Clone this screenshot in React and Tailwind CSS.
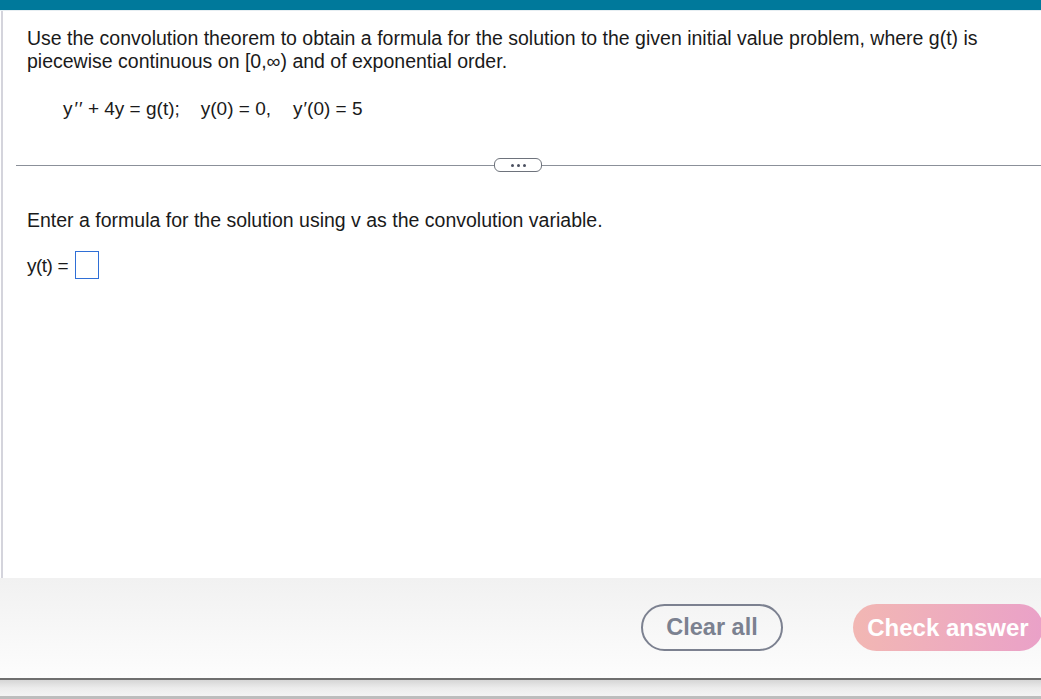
import React from "react";

const font = { fontFamily: '"Liberation Sans", Arial, sans-serif' };

const App = () => {
  return (
    <div className="flex flex-col h-[699px] w-full overflow-hidden bg-white text-[#1a1a1a]" style={font}>
      {/* Top bar */}
      <div className="h-[10px] bg-[#00799b] shrink-0" />
      <div className="h-[1px] bg-[#e6eef2] shrink-0" />

      {/* Question */}
      <div className="flex-1 min-h-0 flex flex-col border-l-2 border-[#d4d4dc] ml-[1px]">
        <div className="pl-[24px] pr-6 pt-[16px] text-[19.5px] leading-[23px]">
          <p>
            Use the convolution theorem to obtain a formula for the solution to the given initial value problem, where g(t) is
            <br />
            piecewise continuous on [0,∞) and of exponential order.
          </p>
          <p className="mt-[24px] pl-[36px] text-[19px] flex items-baseline">
            <span>y<span className="ml-[2px]">′</span><span className="ml-[1px]">′</span> + 4y = g(t);</span>
            <span className="ml-[21px]">y(0) = 0,</span>
            <span className="ml-[22px]">y<span className="ml-[1px]">′</span>(0) = 5</span>
          </p>
        </div>

        {/* Divider */}
        <div className="relative mt-[38px] ml-[13px] h-[14px] flex items-center">
          <div className="w-full h-[1px] bg-[#8b9099]" />
          <div className="absolute left-[478px] top-0 w-[48px] h-[14px] rounded-[6px] border border-[#6e737c] bg-white flex items-center justify-center gap-[3px]">
            <span className="w-[3px] h-[3px] rounded-full bg-[#4b5060]" />
            <span className="w-[3px] h-[3px] rounded-full bg-[#4b5060]" />
            <span className="w-[3px] h-[3px] rounded-full bg-[#4b5060]" />
          </div>
        </div>

        <div className="pl-[24px] pt-[37px] text-[19.5px] leading-[23px]">
          <p>Enter a formula for the solution using v as the convolution variable.</p>
          <div className="mt-[19px] flex items-center">
            <span className="text-[19px] tracking-[-0.5px]">y(t)</span>
            <span className="ml-[5px] text-[19px]">=</span>
            <span className="ml-[6px] w-[24px] h-[28px] border-[1.5px] border-[#2f6fd6] bg-white" />
          </div>
        </div>
      </div>

      {/* Footer */}
      <div className="h-[100px] shrink-0 bg-gradient-to-b from-[#f1f1f1] to-[#fdfdfd] flex items-start justify-end pt-[26px] gap-[70px] -mr-[2px]">
        <button className="w-[142px] h-[47px] rounded-full border-[2.5px] border-[#7c8190] text-[#7b8190] font-bold text-[23.5px]">
          Clear all
        </button>
        <button className="w-[190px] h-[47px] rounded-full bg-gradient-to-r from-[#f2b7b3] to-[#eaa1c8] text-white font-bold text-[24px]">
          Check answer
        </button>
      </div>

      {/* Bottom strip */}
      <div className="h-[2px] bg-[#6f6f6f] shrink-0" />
      <div className="h-[16px] shrink-0 bg-gradient-to-b from-[#d6d6d6] via-[#ececec] to-[#f4f4f4]" />
      <div className="h-[3px] bg-[#bdbdbd] shrink-0" />
    </div>
  );
};

export default App;
